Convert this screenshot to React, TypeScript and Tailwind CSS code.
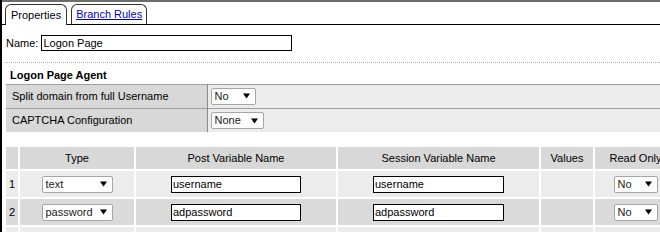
import React from 'react';

const Arrow = () => (
  <svg width="7" height="6" viewBox="0 0 7 6" className="shrink-0">
    <path d="M0 0.5 H7 L3.5 5.5 Z" fill="#000" />
  </svg>
);

const FakeSelect: React.FC<{ value: string; width: number }> = ({ value, width }) => (
  <div
    className="inline-flex items-center justify-between h-[17px] border border-[#a6a6a6] rounded-[2px] bg-white pl-[3px] pr-[5px] text-[#1a1a1a] align-middle"
    style={{ width }}
  >
    <span className="leading-[15px]">{value}</span>
    <Arrow />
  </div>
);

const TextBox: React.FC<{ value: string; width: number }> = ({ value, width }) => (
  <div
    className="inline-flex items-center h-[17px] border border-black bg-white pl-[1px] align-middle"
    style={{ width }}
  >
    <span className="leading-[15px]">{value}</span>
  </div>
);

const fields = [
  { n: 1, type: 'text', post: 'username', session: 'username', ro: 'No' },
  { n: 2, type: 'password', post: 'adpassword', session: 'adpassword', ro: 'No' },
];

export default function App() {
  return (
    <div className="w-[660px] h-[232px] overflow-hidden bg-white border-l-2 border-black font-['Liberation_Sans',Arial,sans-serif] text-[11px] text-black">
      {/* top edge */}
      <div className="h-[2px] bg-[#6e6e6e]" />

      {/* Tabs */}
      <div className="flex items-end h-[23px] border-b border-black pl-[3px] gap-[4px]">
        <div className="relative -mb-px h-[21px] flex items-center px-[5px] border border-b-0 border-[#333] rounded-t-[6px] bg-white">
          Properties
        </div>
        <div className="h-[20px] flex items-center px-[4px] border border-b-0 border-[#333] rounded-t-[6px] bg-white">
          <span className="text-[#0000cc] underline">Branch Rules</span>
        </div>
      </div>

      {/* Name */}
      <div className="flex items-center gap-[3px] pl-[4px] pt-[10px]">
        <span>Name:</span>
        <div className="w-[251px] h-[16px] border border-black flex items-center pl-[1px]">
          <span className="leading-[14px]">Logon Page</span>
        </div>
      </div>

      <div className="mt-[10px] ml-[3px] border-t border-dotted border-[#b4b4b4]" />

      {/* Agent section */}
      <div className="pl-[8px] pt-[5px] font-bold leading-[14px]">Logon Page Agent</div>

      <div className="pl-[4px] mt-[2px]">
        <table className="border-collapse w-[680px]">
          <tbody>
            <tr className="h-[24px]">
              <td className="w-[201px] bg-[#d8d8d8] border-t border-[#a0a0a0] border-r border-r-[#8a8a8a] pl-[6px]">
                Split domain from full Username
              </td>
              <td className="bg-[#ececec] border-t border-[#a0a0a0] pl-[3px]">
                <FakeSelect value="No" width={45} />
              </td>
            </tr>
            <tr className="h-[24px]">
              <td className="bg-[#d8d8d8] border-t border-[#a0a0a0] border-r border-r-[#8a8a8a] pl-[6px]">
                CAPTCHA Configuration
              </td>
              <td className="bg-[#ececec] border-t border-[#a0a0a0] pl-[3px]">
                <FakeSelect value="None" width={53} />
              </td>
            </tr>
          </tbody>
        </table>
      </div>

      {/* Fields table */}
      <div className="pl-[4px] mt-[15px]">
        <table className="border-collapse w-[670px] table-fixed">
          <colgroup>
            <col className="w-[13px]" />
            <col className="w-[116px]" />
            <col className="w-[202px]" />
            <col className="w-[203px]" />
            <col className="w-[54px]" />
            <col className="w-[82px]" />
          </colgroup>
          <thead>
            <tr className="h-[23px] bg-[#d8d8d8]">
              <th className="font-normal border-r-2 border-white" />
              <th className="font-normal border-r-2 border-white text-center">Type</th>
              <th className="font-normal border-r-2 border-white text-center">Post Variable Name</th>
              <th className="font-normal border-r-2 border-white text-center">Session Variable Name</th>
              <th className="font-normal border-r-2 border-white text-center">Values</th>
              <th className="font-normal text-center whitespace-nowrap">Read Only</th>
            </tr>
          </thead>
          <tbody>
            {fields.map((f, i) => (
              <tr
                key={f.n}
                className={`h-[28px] border-t-2 border-white ${i % 2 === 0 ? 'bg-[#ececec]' : 'bg-[#dadada]'}`}
              >
                <td className="border-r-2 border-white pl-[3px]">{f.n}</td>
                <td className="border-r-2 border-white text-center">
                  <FakeSelect value={f.type} width={71} />
                </td>
                <td className="border-r-2 border-white text-center">
                  <TextBox value={f.post} width={130} />
                </td>
                <td className="border-r-2 border-white text-center">
                  <TextBox value={f.session} width={131} />
                </td>
                <td className="border-r-2 border-white" />
                <td className="text-center">
                  <FakeSelect value={f.ro} width={44} />
                </td>
              </tr>
            ))}
            <tr className="h-[28px] border-t-2 border-white bg-[#ececec]">
              <td className="border-r-2 border-white" />
              <td className="border-r-2 border-white" />
              <td className="border-r-2 border-white" />
              <td className="border-r-2 border-white" />
              <td className="border-r-2 border-white" />
              <td />
            </tr>
          </tbody>
        </table>
      </div>
    </div>
  );
}
